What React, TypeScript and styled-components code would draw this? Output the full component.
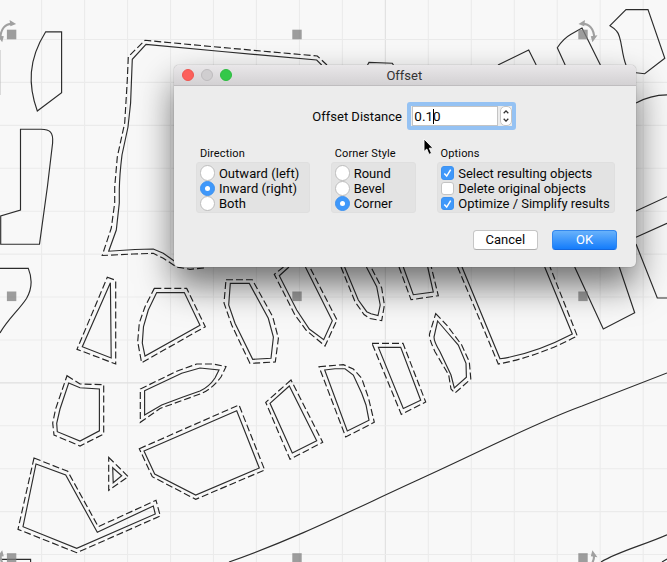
import React from "react";
import styled, { createGlobalStyle } from "styled-components";

const GlobalStyle = createGlobalStyle`
  body { margin: 0; overflow: hidden; background: #f8f8f8; }
  * { box-sizing: border-box; }
`;

const Workspace = styled.main`
  position: relative;
  width: 667px;
  height: 562px;
  overflow: hidden;
  background: #f8f8f8;
  font-family: Roboto, "Liberation Sans", sans-serif;
  color: #080808;
  cursor: default;
`;

const Drawing = styled.svg`
  display: block;
  width: 667px;
  height: 562px;
`;

const Dialog = styled.section`
  position: absolute;
  left: 174.3px;
  top: 64.6px;
  width: 462px;
  height: 202.6px;
  display: flex;
  flex-direction: column;
  background: #ececec;
  border-radius: 5px;
  overflow: hidden;
  box-shadow: 0 0 1px rgba(0, 0, 0, 0.55);
`;

const DialogShadow = styled.div`
  position: absolute;
  left: 174.3px;
  top: 64.6px;
  width: 462px;
  height: 202.6px;
  border-radius: 5px;
  box-shadow: 0 18px 36px 0 rgba(0, 0, 0, 0.56);
`;

const TitleBar = styled.header`
  height: 21.4px;
  flex: none;
  display: grid;
  grid-template-columns: 1fr auto 1fr;
  align-items: center;
  padding: 0 8px;
  background: linear-gradient(#e9e7e9, #d3d1d3);
  border-bottom: 1px solid #bfbdbf;
`;

const Lights = styled.div`
  display: flex;
  gap: 7px;
`;

const Light = styled.span<{ $fill: string; $edge: string }>`
  width: 12px;
  height: 12px;
  border-radius: 50%;
  background: ${(p) => p.$fill};
  border: 1px solid ${(p) => p.$edge};
`;

const Title = styled.h1`
  margin: 0;
  padding: 2px 2px 0 0;
  font-size: 13px;
  line-height: 16px;
  font-weight: 400;
  color: #333;
`;

const Body = styled.div`
  flex: 1;
  display: flex;
  flex-direction: column;
  padding: 16.4px 0 0;
`;

const DistanceRow = styled.label`
  display: flex;
  align-items: center;
  height: 28px;
  padding-left: 138px;
  gap: 5px;
`;

const Caption = styled.span<{ $width: number }>`
  width: ${(p) => p.$width}px;
  padding-top: 2px;
  font-size: 13px;
  line-height: 16px;
  white-space: nowrap;
`;

const Spinner = styled.span`
  display: flex;
  align-items: center;
  justify-content: space-between;
  width: 109px;
  height: 28px;
  padding: 0 0 0 1px;
  border: 4px solid #95c2f3;
  border-radius: 3px;
  background: #ececec;
`;

const Field = styled.span`
  display: flex;
  align-items: center;
  width: 86px;
  height: 20px;
  padding-left: 1px;
  background: #fff;
  border: 1px solid #c4c4c4;
  font-size: 13.5px;
`;

const Caret = styled.i`
  width: 1px;
  height: 15px;
  margin-right: -1px;
  background: #000;
`;

const Stepper = styled.svg`
  width: 12px;
  height: 20px;
`;

const Groups = styled.div`
  display: grid;
  grid-template-columns: 113.4px 84.5px 178px;
  column-gap: 21.4px;
  padding: 15px 0 0 22px;
`;

const Group = styled.fieldset`
  margin: 0;
  padding: 0;
  border: 0;
  min-width: 0;
`;

const Legend = styled.legend`
  padding: 1px 0 0 3.6px;
  font-size: 11px;
  line-height: 16px;
  height: 17px;
  letter-spacing: 0.15px;
`;

const Panel = styled.div<{ $inset: number }>`
  height: 50.5px;
  padding: 2px 0 0 ${(p) => p.$inset}px;
  border-radius: 3px;
  background: #e3e3e3;
  border: 1px solid #dfdfdf;
`;

const Choice = styled.div<{ $gap: number }>`
  height: 15.3px;
  display: flex;
  align-items: center;
  gap: ${(p) => p.$gap}px;
  font-size: 13px;
  line-height: 15px;
  white-space: nowrap;
`;

const Radio = styled.span<{ $on?: boolean }>`
  flex: none;
  display: grid;
  place-items: center;
  width: 15.4px;
  height: 15.4px;
  border-radius: 50%;
  background: ${(p) => (p.$on ? "#3f98fa" : "#fff")};
  border: 1px solid ${(p) => (p.$on ? "#3d92f0" : "#bdbdbd")};

  &::after {
    content: "";
    width: 5.4px;
    height: 5.4px;
    border-radius: 50%;
    background: #fff;
  }
`;

const Check = styled.span<{ $on?: boolean }>`
  flex: none;
  display: grid;
  place-items: center;
  width: 13.4px;
  height: 13.4px;
  border-radius: 3px;
  background: ${(p) => (p.$on ? "#3f98fa" : "#fff")};
  border: 1px solid ${(p) => (p.$on ? "#3d92f0" : "#c4c4c4")};
`;

const Text = styled.span<{ $spacing?: number }>`
  letter-spacing: ${(p) => p.$spacing ?? 0}px;
`;

const Actions = styled.footer`
  display: flex;
  justify-content: flex-end;
  gap: 14.2px;
  padding: 17.3px 19.3px 0 0;
`;

const Button = styled.button<{ $primary?: boolean }>`
  width: 65px;
  height: 20px;
  padding: 0;
  border-radius: 3.5px;
  border: 1px solid ${(p) => (p.$primary ? "#3287ee" : "#c6c6c6")};
  border-bottom-color: ${(p) => (p.$primary ? "#1268e0" : "#adadad")};
  background: ${(p) => (p.$primary ? "linear-gradient(#68b2fb, #147cfb)" : "#fff")};
  color: ${(p) => (p.$primary ? "#fff" : "#080808")};
  font: 13px/16px Roboto, "Liberation Sans", sans-serif;
`;

const Pointer = styled.svg`
  position: absolute;
  left: 422px;
  top: 137px;
  width: 14px;
  height: 20px;
`;

const gridX = Array.from({ length: 15 }, (_, i) => 41.6 + i * 42.97);
const gridY = Array.from({ length: 13 }, (_, i) => 39.5 + i * 42.92);

const plainShapes = [
  "M45.7 31.8H61.6V92.7L37.3 111C28 85 28 60 45.7 31.8Z",
  "M20.5 129.2H41C50 129.4 53.5 132 52.6 143L47.5 186L39.5 244.2H.7V216L20.5 210Z",
  "M0 268.4H28.3C33 280 32 289 26.5 298.5C19 310 8 319 0 333",
  "M0 559.4H30.6V562",
  "M367.5 65L369 62.4L392.3 63.3L393.5 65",
  "M498 65L528.7 50L536.2 65",
  "M565.2 65L557.3 47.7C561 42 566 37 571 34.2L582 28L600.4 65",
  "M626 65C621 53 622 36 616.5 31Q614 28 610 25.7L626 9.6H648L664.8 58.3L644.7 73.7L636 72.7",
  "M636 103Q650 95 667 94.8",
  "M636 211L667 196.7M636 237.3L667 223.3M636 244L657.3 298H667",
  "M574.7 267L603.3 329L634.7 312.7L619.3 267",
  "M229 562C300 537 352 510 420 479C486 449 535 423 582 406L667 373",
  "M601 562C617 552 644 545 667 534.8M662 562L667 559",
];

const outlines = [
  "M321.7 65L316.7 60L222 51.5L146 44.4L132.3 59.3L130.6 103L128 127L122 155Q119.5 175 119.3 190V203L116.3 230L108.7 251.2L135 249.5L153.3 249L163.3 253.3L175 261.5",
  "M110.4 282.7L111.2 358L82.3 346.7Z",
  "M156.7 292.6H184.3L200 325.3L145 356L142.3 343L143.5 326.7L148.3 310Z",
  "M68.7 383L80 387.7L99.4 389V430.8L80 441L57.3 431.7L56.7 423.3L60 409Z",
  "M144.6 390.7L181.7 373.3L200 368L219 370L215 378Q209 387 200 391L183 397L161.7 405L144.6 415Z",
  "M144 451L236.7 410.7L259.3 468L195.7 495L154.7 474Z",
  "M112.7 467.7L121.7 475.8L113.2 482.7Z",
  "M36 464L65.7 475L97.3 532.3L153.3 506L155.3 514L76.7 548.3L23 526.7Z",
  "M230.3 283.4H249.3L268.3 318.3L273.4 337L271 358.3L252.7 359.3L235 323.3L228.7 305Z",
  "M289 267L279.3 275.7L296.7 310L309.3 329L323.7 339.7L332.3 320.7L305.4 267",
  "M344.6 267L358.3 300L366.7 311.7L371 313.8L378 315.5L380.2 305L376.7 286.7L366.4 267",
  "M403.3 267L413.3 294.7L433.3 292L427.7 267",
  "M462 267L500 358.8Q534 354 572.3 334L544.7 267",
  "M437.6 321L447 332L458.3 345L466 363.3L466.4 377.3L454.3 388L451 375L440 351.7Q434 342 434 337Z",
  "M378.4 347.4H400.7L420.7 400.3L403.3 408.4Z",
  "M324.7 370L335 368.7H345L353.3 375L361.7 393.3L366 405L369 420.3L347.3 431Z",
  "M289.3 386L270 403.3L292.3 453L316.7 440.7Z",
];

const offsets = [
  "M327 65L317.3 56L222 47.5L145 40.3L128.3 56.7L127.3 80L124.7 123L117.3 157L114.7 187V203L111.3 228L102.2 255.5L133 254L153.3 253.3L163.3 258.3L176.7 267L190 269.3L204 268",
  "M107.3 277.3L115.7 280.3V364L77 349.3Z",
  "M154.3 288.4H186.7L205.3 326.7L141.6 362.7L137.7 341.7L139.3 323L145 306.7Z",
  "M67 375.7L80 384L103.7 384.7V434L80 446L54 435L52.7 423L55.6 409Z",
  "M140.3 389L176.7 371.3L196.7 364L213.3 364L226 366.7L221 377Q211 390 200 394L160 408.5L140.3 422.3Z",
  "M139.3 448.7L239 405L264.7 470L195.7 499.3L152.3 476.7Z",
  "M108.7 457.3L128.3 476.7L108.7 490.3Z",
  "M34 458L67.7 471.3L98.3 526.7L156 500.3L160.3 516L76.7 552.7L18 529.3Z",
  "M226 279.7H252.3L272.7 316.7L278.4 338.3L275.3 362L250 363.4L231.7 325L224 303Z",
  "M283.5 267L274.3 274.3L295 315L306 330L325 346L337 320L309.7 267",
  "M341 267L355 301.7L364 314.5L370 318.5L381.7 320.7L384.4 305L381.7 288L371 267",
  "M399 267L411 299.7L438.3 295.7L431.3 267",
  "M457.6 267L498.3 364Q537 357 577.3 336L550 267",
  "M435.7 313.7L446.7 325L461.7 345L469.3 361.7L470.8 379L455 393L451 389L448.7 375L435 351.7Q429 339 429.5 334Z",
  "M372 343.4H403L425.7 402L401.3 414.4Z",
  "M319 366.7L343.3 364.6L353.3 369L361.7 378.3L368.5 398L374.3 422.3L345.7 437Z",
  "M291 380L265.7 402.3L290 459.3L322.7 442.3Z",
];

const handles = [
  [11.6, 34.5], [297, 34.5], [583, 34.5],
  [11.6, 296.3], [297, 296.3], [583, 296.3],
  [11.6, 558], [297, 558], [583, 558],
];

const rotations = [
  "translate(583 34.5)",
  "translate(11.6 34.5) scale(-1 1)",
  "translate(583 558) scale(1 -1)",
  "translate(11.6 558) scale(-1 -1)",
];

const directions = [
  { label: "Outward (left)", on: false, spacing: 0.04 },
  { label: "Inward (right)", on: true, spacing: 0.04 },
  { label: "Both", on: false, spacing: 0 },
];
const corners = [
  { label: "Round", on: false },
  { label: "Bevel", on: false },
  { label: "Corner", on: true },
];
const options = [
  { label: "Select resulting objects", on: true },
  { label: "Delete original objects", on: false },
  { label: "Optimize / Simplify results", on: true },
];

function Canvas() {
  return (
    <Drawing viewBox="0 0 667 562" fill="none">
      <g stroke="#ebebeb" strokeWidth="1.1">
        {gridX.map((x, i) => (
          <path key={i} d={`M${x} 0V562`} stroke={i === 8 ? "#dfdfdf" : undefined} />
        ))}
        {gridY.map((y, i) => (
          <path key={i} d={`M0 ${y}H667`} stroke={i === 8 ? "#dfdfdf" : undefined} />
        ))}
      </g>
      <path d="M0 50V95" stroke="#bbb" />
      <g stroke="#2c2c2c" strokeWidth="1.15">
        {[...plainShapes, ...outlines].map((d) => <path key={d} d={d} />)}
      </g>
      <g stroke="#242424" strokeWidth="1.15" strokeDasharray="7 3">
        {offsets.map((d) => <path key={d} d={d} />)}
      </g>
      <g fill="#808080" fillOpacity="0.76">
        {handles.map(([x, y]) => (
          <rect key={`${x}-${y}`} x={x - 4.7} y={y - 4.8} width="9.4" height="9.6" />
        ))}
      </g>
      {rotations.map((t) => (
        <g key={t} transform={t}>
          <path d="M0 -10.6C6 -10.6 11 -6 11.2 3.5" stroke="#a0a0a0" strokeWidth="2.1" />
          <path d="M-4.5 -10.6L2 -14.4L1.2 -8.2ZM7.8 1.8L14.5 .7L9.4 7.8Z" fill="#a0a0a0" />
        </g>
      ))}
    </Drawing>
  );
}

function RadioGroup({ title, items }: { title: string; items: { label: string; on: boolean; spacing?: number }[] }) {
  return (
    <Group>
      <Legend>{title}</Legend>
      <Panel $inset={2.6}>
        {items.map((item) => (
          <Choice key={item.label} $gap={3.6}>
            <Radio $on={item.on} />
            <Text $spacing={item.spacing}>{item.label}</Text>
          </Choice>
        ))}
      </Panel>
    </Group>
  );
}

export default function App() {
  return (
    <>
      <GlobalStyle />
      <Workspace>
        <Canvas />
        <DialogShadow />
        <Dialog>
          <TitleBar>
            <Lights>
              <Light $fill="#fc605b" $edge="#ee5550" />
              <Light $fill="#d0ced0" $edge="#bdbbbd" />
              <Light $fill="#34c84a" $edge="#2dbb40" />
            </Lights>
            <Title>Offset</Title>
          </TitleBar>
          <Body>
            <DistanceRow>
              <Caption $width={90}>Offset Distance</Caption>
              <Spinner>
                <Field>0.1<Caret />0</Field>
                <Stepper viewBox="0 0 12 20" fill="none">
                  <rect x=".5" y=".5" width="11" height="19" rx="4.5" fill="#fff" stroke="#c4c4c4" />
                  <path d="M3.7 7.3L6 4.9L8.3 7.3M3.7 12.7L6 15.1L8.3 12.7" stroke="#333" strokeWidth="1.3" />
                </Stepper>
              </Spinner>
            </DistanceRow>
            <Groups>
              <RadioGroup title="Direction" items={directions} />
              <RadioGroup title="Corner Style" items={corners} />
              <Group>
                <Legend>Options</Legend>
                <Panel $inset={2.9}>
                  {options.map((item) => (
                    <Choice key={item.label} $gap={4}>
                      <Check $on={item.on}>
                        {item.on && (
                          <svg width="9" height="10" viewBox="0 0 9 10" fill="none">
                            <path d="M1.3 5.4L3.7 8.1L7.7 1.7" stroke="#fff" strokeWidth="1.5" />
                          </svg>
                        )}
                      </Check>
                      <Text $spacing={-0.03}>{item.label}</Text>
                    </Choice>
                  ))}
                </Panel>
              </Group>
            </Groups>
            <Actions>
              <Button>Cancel</Button>
              <Button $primary>OK</Button>
            </Actions>
          </Body>
        </Dialog>
        <Pointer viewBox="0 0 14 20">
          <path d="M2 2V14.5L4.8 12L7 17.4L9.5 16.3L7.3 11.2H11Z" fill="#000" stroke="#fff" strokeWidth=".9" />
        </Pointer>
      </Workspace>
    </>
  );
}
